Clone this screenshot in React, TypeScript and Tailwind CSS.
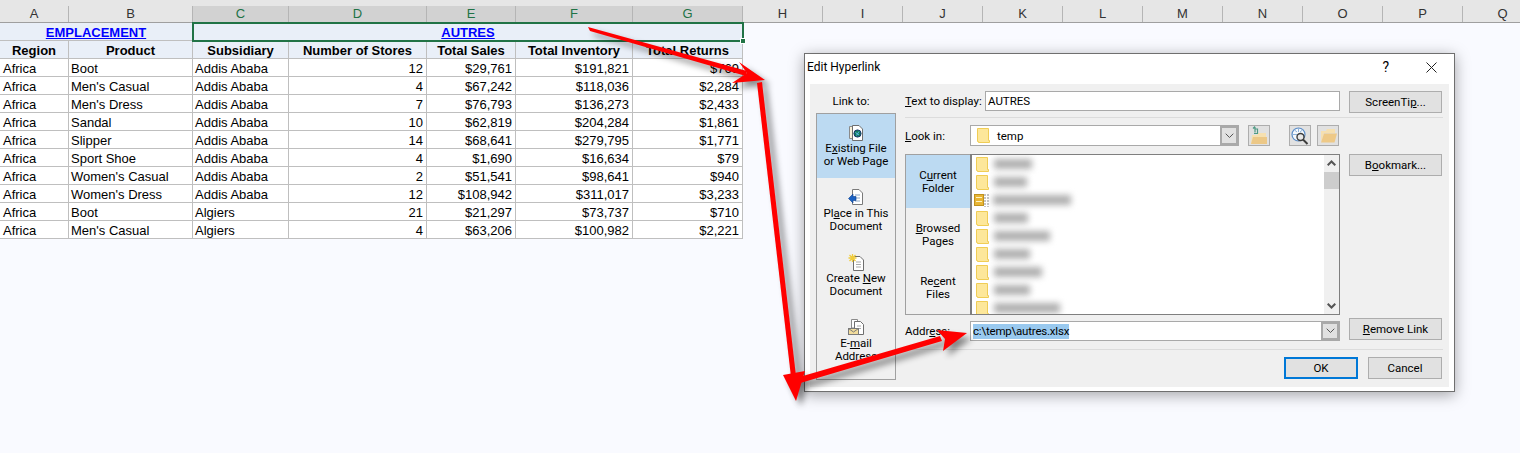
import React from 'react';

const ROWS = [
  ['Africa', 'Boot', 'Addis Ababa', '12', '$29,761', '$191,821', '$769'],
  ['Africa', "Men's Casual", 'Addis Ababa', '4', '$67,242', '$118,036', '$2,284'],
  ['Africa', "Men's Dress", 'Addis Ababa', '7', '$76,793', '$136,273', '$2,433'],
  ['Africa', 'Sandal', 'Addis Ababa', '10', '$62,819', '$204,284', '$1,861'],
  ['Africa', 'Slipper', 'Addis Ababa', '14', '$68,641', '$279,795', '$1,771'],
  ['Africa', 'Sport Shoe', 'Addis Ababa', '4', '$1,690', '$16,634', '$79'],
  ['Africa', "Women's Casual", 'Addis Ababa', '2', '$51,541', '$98,641', '$940'],
  ['Africa', "Women's Dress", 'Addis Ababa', '12', '$108,942', '$311,017', '$3,233'],
  ['Africa', 'Boot', 'Algiers', '21', '$21,297', '$73,737', '$710'],
  ['Africa', "Men's Casual", 'Algiers', '4', '$63,206', '$100,982', '$2,221'],
];

const HEADERS = ['Region', 'Product', 'Subsidiary', 'Number of Stores', 'Total Sales', 'Total Inventory', 'Total Returns'];

const COLUMNS = [
  { label: 'A', width: 'w-[69px]', active: false },
  { label: 'B', width: 'w-[124px]', active: false },
  { label: 'C', width: 'w-[96px]', active: true },
  { label: 'D', width: 'w-[138px]', active: true },
  { label: 'E', width: 'w-[89px]', active: true },
  { label: 'F', width: 'w-[117px]', active: true },
  { label: 'G', width: 'w-[110px]', active: true },
  ...['H', 'I', 'J', 'K', 'L', 'M', 'N', 'O', 'P', 'Q'].map((label) => ({ label, width: 'w-[80px]', active: false })),
];

const FILES = [
  { w: 'w-[38px]', icon: 'folder' },
  { w: 'w-[33px]', icon: 'folder' },
  { w: 'w-[78px]', icon: 'db' },
  { w: 'w-[34px]', icon: 'folder' },
  { w: 'w-[56px]', icon: 'folder' },
  { w: 'w-[36px]', icon: 'folder' },
  { w: 'w-[48px]', icon: 'folder' },
  { w: 'w-[36px]', icon: 'folder' },
  { w: 'w-[66px]', icon: 'folder' },
];

const FolderIcon = () => (
  <svg width="13" height="15" viewBox="0 0 13 15" className="shrink-0">
    <path d="M0.5 0.5H11.5V12.5H12.5V14.5H1.5V13.5H0.5Z" fill="#fde79a" stroke="#f0cd55" />
  </svg>
);

const DbIcon = () => (
  <svg width="15" height="15" viewBox="0 0 15 15" className="shrink-0 -ml-[2px] -mr-[1px]">
    <rect x="0.5" y="1.5" width="9" height="11" fill="#e8b534" stroke="#c0921f" />
    <rect x="2" y="4" width="6" height="1" fill="#fff3c0" />
    <rect x="2" y="8" width="6" height="1" fill="#fff3c0" />
    <path d="M11 1V14M14 1V14" stroke="#8a8a8a" strokeDasharray="2 1" />
  </svg>
);

const WebPageIcon = () => (
  <svg width="16" height="16" viewBox="0 0 16 16">
    <path d="M1.5 1.5H8V13.5H1.5Z" fill="#f6efd8" stroke="#8a8a8a" />
    <path d="M4.5 0.5H11L14.5 4V15.5H4.5Z" fill="#fff" stroke="#6e6e6e" />
    <circle cx="9.5" cy="8.5" r="3.6" fill="#157a5a" stroke="#16366e" />
    <path d="M7.5 7.5L11 10M8.5 10.5L11 6.5" stroke="#58b8e8" />
  </svg>
);

const PlaceIcon = () => (
  <svg width="16" height="17" viewBox="0 0 16 17">
    <path d="M4.5 0.5H11L14.5 4V15.5H4.5Z" fill="#fff" stroke="#7a7a7a" />
    <path d="M7 6H12M7 9H12M7 12H12" stroke="#8aa6c8" />
    <path d="M5 5L0.5 9.5L5 14V11.5H8V7.5H5Z" fill="#1b62c4" stroke="#0f3f8a" strokeWidth="0.6" />
  </svg>
);

const NewDocIcon = () => (
  <svg width="17" height="17" viewBox="0 0 17 17">
    <path d="M5.5 2.5H12L15.5 6V16.5H5.5Z" fill="#fff" stroke="#6e6e6e" />
    <path d="M8 8H13M8 10.5H13M8 13H13" stroke="#a8a8a8" />
    <path d="M4.5 0V8M0.5 4H8.5M1.5 1L7.5 7M7.5 1L1.5 7" stroke="#f0cc3c" strokeWidth="1.3" />
  </svg>
);

const MailIcon = () => (
  <svg width="17" height="17" viewBox="0 0 17 17">
    <path d="M3.5 0.5H9.5V9H3.5Z" fill="#fff" stroke="#8a8a8a" />
    <path d="M6.5 2.5H12.5L15.5 5.5V15.5H6.5Z" fill="#fff" stroke="#6e6e6e" />
    <path d="M9 7H13M9 9.5H13" stroke="#a8a8a8" />
    <rect x="0.5" y="9.5" width="10" height="6" fill="#f2dc9c" stroke="#7a7a7a" />
    <path d="M0.5 9.5L5.5 13L10.5 9.5" fill="none" stroke="#7a7a7a" />
  </svg>
);

const UpFolderIcon = () => (
  <svg width="18" height="19" viewBox="0 0 18 19">
    <path d="M1 18L2 9H7L8 7H16V18Z" fill="#f6e0b0" />
    <path d="M3 11L1 18H17V11H4Z" fill="#ecc887" />
    <path d="M5 1V6.5M3 2.5L5 0.5M5 3H7.5V7.5H4" fill="none" stroke="#4e9a84" strokeWidth="1.2" />
  </svg>
);

const SearchWebIcon = () => (
  <svg width="18" height="18" viewBox="0 0 18 18">
    <circle cx="7.5" cy="7.5" r="6.5" fill="#f4f8fc" stroke="#5b8dc8" strokeWidth="1.2" />
    <path d="M1 7.5H14M7.5 1V5M3.5 3L6 5M11.5 3L9 5" stroke="#8db2da" />
    <circle cx="9.5" cy="10" r="3.5" fill="#e8e8e8" stroke="#3c3c3c" strokeWidth="1.4" />
    <path d="M12 12.5L16.5 17" stroke="#3c3c3c" strokeWidth="2" />
  </svg>
);

const OpenFolderIcon = () => (
  <svg width="17" height="15" viewBox="0 0 17 15">
    <path d="M1 14V3H6L7 1H15V5H4L1 14Z" fill="#f6e0b0" />
    <path d="M4 5.5H17L14.5 14.5H1Z" fill="#eec987" />
  </svg>
);

const Chevron = ({ bold }: { bold?: boolean }) => (
  <svg width="9" height="6" viewBox="0 0 9 6">
    <path d="M0.7 0.7L4.5 4.5L8.3 0.7" fill="none" stroke="#555" strokeWidth={bold ? 2 : 1} />
  </svg>
);

const Btn = ({ children }: { children: React.ReactNode }) => (
  <button
    type="button"
    className="w-[93px] h-[22px] shrink-0 bg-[#e1e1e1] border border-[#adadad] text-[11.5px] leading-[20px] text-center text-black"
  >
    {children}
  </button>
);

const ToolBtn = ({ children }: { children: React.ReactNode }) => (
  <div className="w-[22px] h-[21px] shrink-0 bg-[#e1e1e1] border border-[#adadad] flex items-center justify-center">
    {children}
  </div>
);

const LinkItem = ({ icon, selected, lines }: { icon: React.ReactNode; selected?: boolean; lines: React.ReactNode[] }) => (
  <div className={`flex flex-col items-center ${selected ? 'h-[64px] pt-[10px] bg-[#bcdaf2]' : 'h-[65px] pt-[11px]'}`}>
    <div className="h-[17px] flex items-center">{icon}</div>
    <div className="text-center leading-[13px] mt-[1px]">
      {lines.map((line, i) => (
        <div key={i}>{line}</div>
      ))}
    </div>
  </div>
);

const EditHyperlink = () => (
  <div className="absolute left-[804px] top-[53px] w-[651px] h-[339px] bg-white border border-[#6f6f6f] shadow-[0_3px_14px_rgba(0,0,0,0.35)] flex flex-col font-['Roboto',sans-serif] text-[11.5px] text-black z-10">
    <div className="h-[30px] shrink-0 flex items-center pl-[2px] pb-[6px] pt-[2px]">
      <span className="flex-1 text-[12px]">Edit Hyperlink</span>
      <span className="text-[14px] mr-[37px]">?</span>
      <svg width="11" height="11" viewBox="0 0 11 11" className="mr-[17px]">
        <path d="M0.5 0.5L10.5 10.5M10.5 0.5L0.5 10.5" stroke="#222" strokeWidth="1" />
      </svg>
    </div>
    <div className="mx-[5px] mb-[4px] flex-1 bg-[#f0f0f0] flex">
      <div className="w-[85px] ml-[6px] shrink-0 flex flex-col">
        <div className="w-[70px] h-[29px] pt-[10px] text-center leading-[14px]">Link to:</div>
        <div className="w-[80px] h-[267px] border border-[#a0a0a0] bg-[#f0f0f0]">
          <LinkItem
            selected
            icon={<WebPageIcon />}
            lines={[<>E<u>x</u>isting File</>, 'or Web Page']}
          />
          <LinkItem icon={<PlaceIcon />} lines={[<>Pl<u>a</u>ce in This</>, 'Document']} />
          <LinkItem icon={<NewDocIcon />} lines={[<>Create <u>N</u>ew</>, 'Document']} />
          <LinkItem icon={<MailIcon />} lines={[<>E-<u>m</u>ail</>, 'Address']} />
        </div>
      </div>
      <div className="w-[538px] ml-[4px] shrink-0 flex flex-col pt-[7px]">
        <div className="flex items-start h-[22px]">
          <span className="w-[80px] leading-[20px] shrink-0"><u>T</u>ext to display:</span>
          <div className="w-[355px] h-[20px] bg-white border border-[#a9a9a9] pl-[2px] leading-[18px] shrink-0">AUTRES</div>
          <div className="ml-[9px]"><Btn>ScreenTi<u>p</u>...</Btn></div>
        </div>
        <div className="h-px bg-[#dcdcdc] mt-[4px] mb-[7px]" />
        <div className="flex items-start h-[21px]">
          <span className="w-[65px] leading-[22px] shrink-0"><u>L</u>ook in:</span>
          <div className="w-[269px] h-[21px] bg-white border border-[#a9a9a9] flex items-center shrink-0 leading-[21px]">
            <div className="ml-[6px] mr-[7px] flex"><FolderIcon /></div>
            <span className="pt-[1px]">temp</span>
            <div className="ml-auto w-[18px] h-full bg-[#e1e1e1] border-2 border-[#a9a9a9] flex items-center justify-center"><Chevron /></div>
          </div>
          <div className="ml-[9px]"><ToolBtn><UpFolderIcon /></ToolBtn></div>
          <div className="ml-[19px]"><ToolBtn><SearchWebIcon /></ToolBtn></div>
          <div className="ml-[6px]"><ToolBtn><OpenFolderIcon /></ToolBtn></div>
        </div>
        <div className="flex items-start mt-[8px]">
          <div className="w-[65px] h-[161px] shrink-0 border-l border-y border-[#a0a0a0] flex flex-col text-center leading-[13px]">
            <div className="h-[53px] bg-[#bcdaf2] pt-[14px]">C<u>u</u>rrent<br />Folder</div>
            <div className="h-[53px] pt-[14px]"><u>B</u>rowsed<br />Pages</div>
            <div className="h-[53px] pt-[14px]">Re<u>c</u>ent<br />Files</div>
          </div>
          <div className="w-[370px] h-[161px] shrink-0 bg-white border-l-2 border-y border-r border-[#7f7f7f] flex overflow-hidden">
            <div className="flex-1 pl-[4px] overflow-hidden">
              {FILES.map((file, i) => (
                <div key={i} className="h-[18px] flex items-center gap-[5px]">
                  {file.icon === 'db' ? <DbIcon /> : <FolderIcon />}
                  <div className={`h-[10px] ${file.w} bg-[#b0b0b0] blur-[3px]`} />
                </div>
              ))}
            </div>
            <div className="w-[15px] shrink-0 bg-[#f0f0f0] flex flex-col items-center">
              <div className="h-[17px] flex items-center rotate-180"><Chevron bold /></div>
              <div className="w-full h-[17px] bg-[#cdcdcd]" />
              <div className="mt-auto h-[17px] flex items-center"><Chevron bold /></div>
            </div>
          </div>
          <div className="ml-[9px]"><Btn>B<u>o</u>okmark...</Btn></div>
        </div>
        <div className="flex items-start h-[23px] mt-[3px]">
          <span className="w-[65px] leading-[24px] shrink-0 pt-[1px]">Addr<u>e</u>ss:</span>
          <div className="w-[370px] h-[20px] mt-[3px] bg-white border border-[#a9a9a9] flex items-center shrink-0 pl-[2px]">
            <span className="bg-[#99c9ef] leading-[15px] tracking-[-0.2px]">c:\temp\autres.xlsx</span>
            <div className="ml-auto w-[18px] h-full bg-[#e1e1e1] border-2 border-[#a9a9a9] flex items-center justify-center"><Chevron /></div>
          </div>
          <div className="ml-[9px]"><Btn><u>R</u>emove Link</Btn></div>
        </div>
        <div className="h-px bg-[#dcdcdc] mt-[8px] mb-[7px]" />
        <div className="flex justify-end pr-[1px] gap-[10px]">
          <button type="button" className="w-[74px] h-[22px] bg-[#e1e1e1] border-2 border-[#0078d7] leading-[18px]">OK</button>
          <button type="button" className="w-[74px] h-[22px] bg-[#e1e1e1] border border-[#adadad] leading-[20px]">Cancel</button>
        </div>
      </div>
    </div>
  </div>
);

const Arrows = () => (
  <svg
    width="1520"
    height="453"
    viewBox="0 0 1520 453"
    className="absolute inset-0 z-20 pointer-events-none drop-shadow-[5px_5px_3px_rgba(0,0,0,0.45)]"
  >
    <path d="M588 27L590 31L746 76L747 71Z" fill="#ff0000" />
    <path d="M739 62L765 80L732 83L747 73Z" fill="#ff0000" />
    <path d="M757 83L762 82L796 376L791 377Z" fill="#ff0000" />
    <path d="M783 375L805 371L796 401Z" fill="#ff0000" />
    <path d="M796 378L940 336L942 341L797 384Z" fill="#ff0000" />
    <path d="M937 330L967 333L943 351L945 339Z" fill="#ff0000" />
  </svg>
);

export default function App() {
  return (
    <div className="relative w-[1520px] h-[453px] overflow-hidden bg-[#f9faff] font-['Liberation_Sans',Arial,sans-serif] text-[13px] text-black">
      <div className="h-[6px] bg-[#e6e6e6]" />
      <div className="flex h-[17px] bg-[#e6e6e6] border-b border-[#9f9f9f]">
        {COLUMNS.map((col) => (
          <div
            key={col.label}
            className={`${col.width} shrink-0 border-r border-[#b5b5b5] text-center leading-[16px] ${col.active ? 'bg-[#d2d2d2] text-[#217346]' : 'text-[#333]'}`}
          >
            {col.label}
          </div>
        ))}
      </div>
      <div className="w-[743px] grid grid-cols-[69px_124px_96px_138px_89px_117px_110px]">
        <div className="col-span-2 h-[18px] bg-[#e9eff8] border-r border-b border-[#bfbfbf] text-center font-bold text-[#0000ff] underline leading-[20px]">
          EMPLACEMENT
        </div>
        <div className="relative col-span-5 h-[18px] bg-[#e9eff8] outline-2 -outline-offset-1 outline-[#217346] text-center font-bold text-[#0000ff] underline leading-[20px]">
          AUTRES
          <div className="absolute -right-[3px] -bottom-[3px] w-[6px] h-[6px] bg-[#217346] border border-white" />
        </div>
        {HEADERS.map((h) => (
          <div key={h} className="h-[18px] bg-[#e9eff8] border-r border-b border-[#bfbfbf] text-center font-bold leading-[20px]">
            {h}
          </div>
        ))}
        {ROWS.map((row, r) =>
          row.map((cell, c) => (
            <div
              key={`${r}-${c}`}
              className={`h-[18px] bg-white border-r border-b border-[#bfbfbf] leading-[20px] whitespace-nowrap ${c > 2 ? 'pr-[3px] text-right' : c === 0 ? 'pl-[3px]' : 'pl-[2px]'}`}
            >
              {cell}
            </div>
          )),
        )}
      </div>
      <EditHyperlink />
      <Arrows />
    </div>
  );
}
